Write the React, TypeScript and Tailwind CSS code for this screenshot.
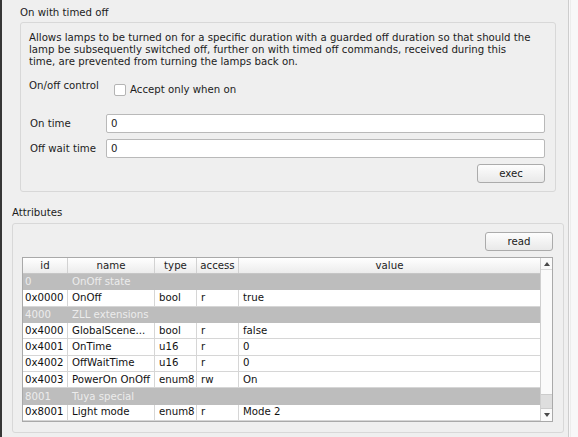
import React from 'react';

interface AttrRow {
    id: string;
    name: string;
    type?: string;
    access?: string;
    value?: string;
    section?: boolean;
}

const rows: AttrRow[] = [
    { id: '0', name: 'OnOff state', section: true },
    { id: '0x0000', name: 'OnOff', type: 'bool', access: 'r', value: 'true' },
    { id: '4000', name: 'ZLL extensions', section: true },
    { id: '0x4000', name: 'GlobalScene...', type: 'bool', access: 'r', value: 'false' },
    { id: '0x4001', name: 'OnTime', type: 'u16', access: 'r', value: '0' },
    { id: '0x4002', name: 'OffWaitTime', type: 'u16', access: 'r', value: '0' },
    { id: '0x4003', name: 'PowerOn OnOff', type: 'enum8', access: 'rw', value: 'On' },
    { id: '8001', name: 'Tuya special', section: true },
    { id: '0x8001', name: 'Light mode', type: 'enum8', access: 'r', value: 'Mode 2' },
];

const cols = 'grid grid-cols-[45px_87px_42px_42px_1fr]';

function QtButton({ label }: { label: string }) {
    return (
        <button className="w-[68px] h-[19px] rounded-[3px] border border-[#ababab] bg-gradient-to-b from-[#fdfdfd] to-[#e9e9e9] text-[10.2px] leading-[12px] text-[#202020]">
            {label}
        </button>
    );
}

function Field({ label, value }: { label: string; value: string }) {
    return (
        <div className="flex items-center">
            <span className="w-[77px] pl-[1px]">{label}</span>
            <div className="flex-1 h-[19px] rounded-[2px] border border-[#b9b9b9] bg-white flex items-center pl-[4px]">
                {value}
            </div>
        </div>
    );
}

export default function App() {
    return (
        <div
            className="w-[578px] h-[437px] flex bg-[#efefef] text-[10.2px] leading-[12px] text-[#1c1c1c] overflow-hidden"
            style={{ fontFamily: '"DejaVu Sans", "Liberation Sans", sans-serif' }}
        >
            {/* left window edge */}
            <div className="w-[2px] bg-[#363636]" />

            <div className="flex-1 flex flex-col">
                {/* On with timed off */}
                <div className="pl-[18px] pr-[12px] pt-[7px]">
                    <div>On with timed off</div>
                    <div className="mt-[3px] h-[170px] border border-[#d8d8d8] rounded-[3px] pl-[8px] pr-[10px] pt-[9px]">
                        <p>
                            Allows lamps to be turned on for a specific duration with a guarded off duration so that should the
                            <br />
                            lamp be subsequently switched off, further on with timed off commands, received during this
                            <br />
                            time, are prevented from turning the lamps back on.
                        </p>
                        <div className="flex items-start mt-[12px]">
                            <span className="w-[85px]">On/off control</span>
                            <div className="flex items-center gap-[4px] mt-[4px]">
                                <div className="w-[12px] h-[12px] rounded-[2px] border border-[#b4b4b4] bg-white" />
                                <span>Accept only when on</span>
                            </div>
                        </div>
                        <div className="flex flex-col gap-[6px] mt-[18px]">
                            <Field label="On time" value="0" />
                            <Field label="Off wait time" value="0" />
                            <div className="flex justify-end">
                                <QtButton label="exec" />
                            </div>
                        </div>
                    </div>
                </div>

                {/* Attributes */}
                <div className="pl-[10px] pr-[4px] pt-[15px]">
                    <div>Attributes</div>
                    <div className="mt-[4px] h-[210px] border border-[#d8d8d8] rounded-[3px] pl-[9px] pr-[10px] pt-[8px]">
                        <div className="flex justify-end">
                            <QtButton label="read" />
                        </div>
                        <div className="mt-[6px] h-[165px] border border-[#a9a9a9] bg-white flex">
                            <div className="flex-1 flex flex-col">
                                <div className={`${cols} h-[16px] bg-gradient-to-b from-[#ffffff] to-[#ececec] border-b border-[#c6c6c6] text-center`}>
                                    <span className="border-r border-[#d2d2d2] leading-[15px]">id</span>
                                    <span className="border-r border-[#d2d2d2] leading-[15px]">name</span>
                                    <span className="border-r border-[#d2d2d2] leading-[15px]">type</span>
                                    <span className="border-r border-[#d2d2d2] leading-[15px]">access</span>
                                    <span className="leading-[15px]">value</span>
                                </div>
                                {rows.map((r) =>
                                    r.section ? (
                                        <div key={r.id} className={`${cols} h-[16.5px] items-center bg-[#bdbdbd] text-[#ececec]`}>
                                            <span className="pl-[2px]">{r.id}</span>
                                            <span className="pl-[4px] col-span-4">{r.name}</span>
                                        </div>
                                    ) : (
                                        <div key={r.id} className={`${cols} h-[16.5px] border-b border-[#d6d6d6] text-[#111]`}>
                                            <span className="pl-[2px] border-r border-[#d6d6d6] flex items-center">{r.id}</span>
                                            <span className="pl-[4px] border-r border-[#d6d6d6] flex items-center whitespace-nowrap">{r.name}</span>
                                            <span className="pl-[4px] border-r border-[#d6d6d6] flex items-center">{r.type}</span>
                                            <span className="pl-[4px] border-r border-[#d6d6d6] flex items-center">{r.access}</span>
                                            <span className="pl-[4px] flex items-center">{r.value}</span>
                                        </div>
                                    )
                                )}
                            </div>
                            {/* scrollbar */}
                            <div className="w-[12px] border-l border-[#cfcfcf] bg-[#fafafa] flex flex-col">
                                <div className="h-[12px] border-b border-[#dcdcdc] flex items-center justify-center">
                                    <svg width="6" height="4" viewBox="0 0 6 4">
                                        <path d="M0 4 L3 0 L6 4 Z" fill="#4a4a4a" />
                                    </svg>
                                </div>
                                <div className="flex-1 flex flex-col justify-end">
                                    <div className="h-[15px] bg-[#dedede] border-y border-[#cccccc]" />
                                </div>
                                <div className="h-[12px] flex items-center justify-center">
                                    <svg width="6" height="4" viewBox="0 0 6 4">
                                        <path d="M0 0 L6 0 L3 4 Z" fill="#4a4a4a" />
                                    </svg>
                                </div>
                            </div>
                        </div>
                    </div>
                </div>
            </div>

            {/* right edge */}
            <div className="w-[10px] border-l border-[#cdcdcd] bg-[#f8f7f8] flex">
                <div className="w-[1px] bg-[#ececec] ml-[1px]" />
            </div>
        </div>
    );
}
